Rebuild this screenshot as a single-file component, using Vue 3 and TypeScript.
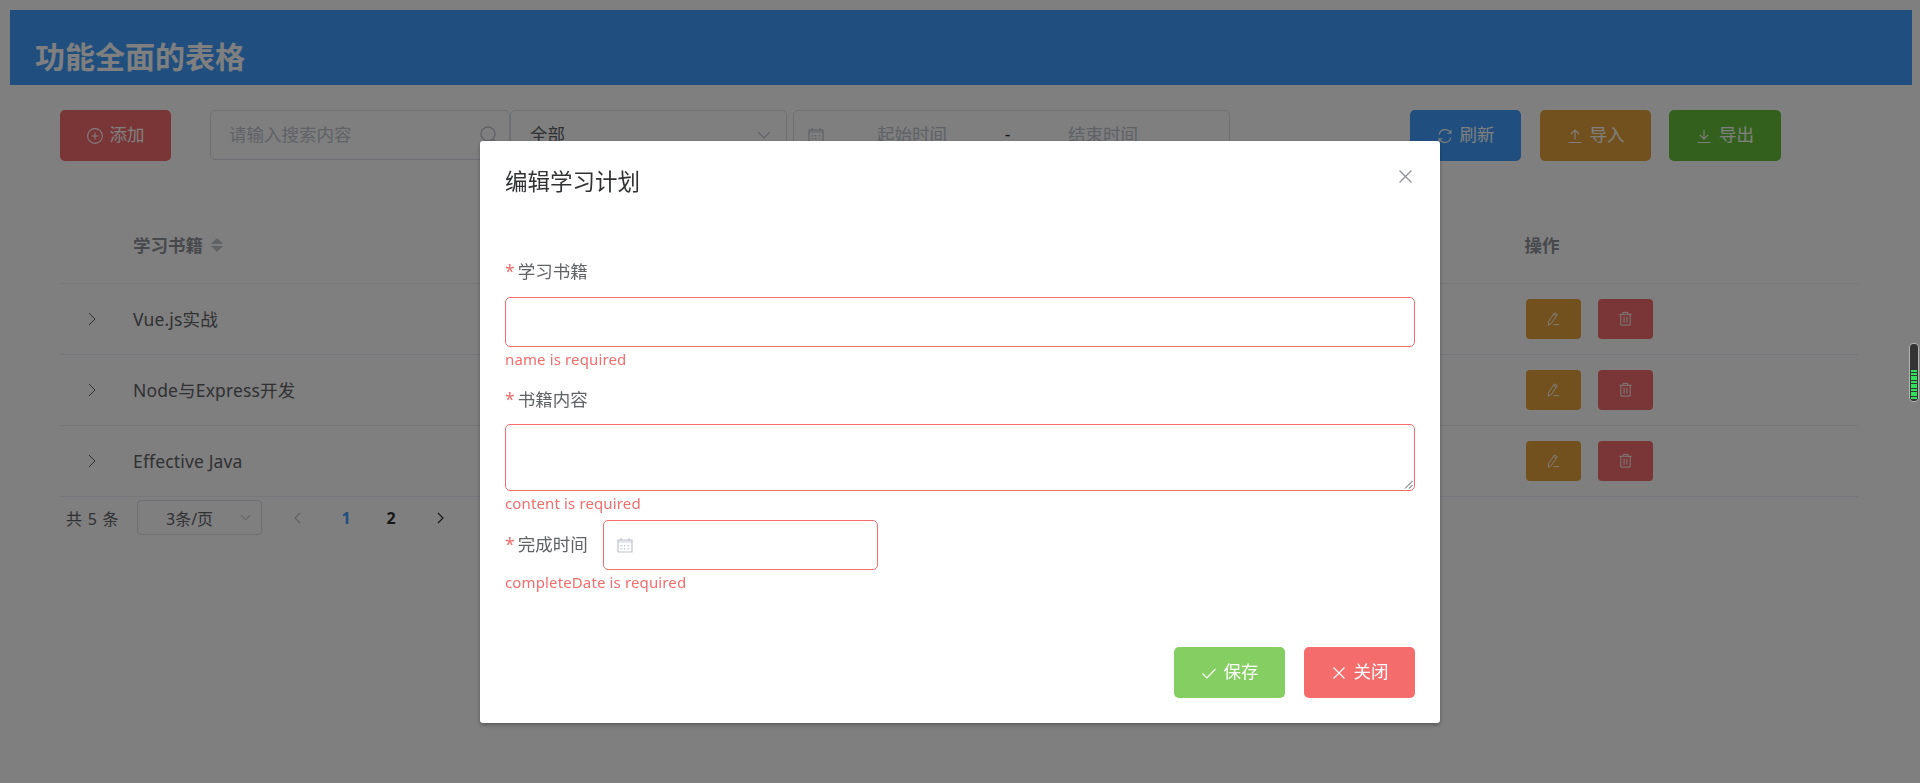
<script setup lang="ts">
interface Book { name: string }
const books: Book[] = [
  { name: 'Vue.js实战' },
  { name: 'Node与Express开发' },
  { name: 'Effective Java' },
]
const bars: number[] = Array.from({ length: 11 }, (_, i) => i)
</script>

<template>
  <div class="page">
    <header class="banner"><h2>功能全面的表格</h2></header>

    <div class="toolbar">
      <button class="btn danger add">
        <svg class="ico" viewBox="0 0 16 16"><circle cx="8" cy="8" r="7.400" /><path d="M8 4.600v6.800M4.600 8h6.800" /></svg>
        <span class="t">添加</span>
      </button>
      <div class="field search">
        <span class="placeholder">请输入搜索内容</span>
        <svg class="search-ico" viewBox="0 0 18 18"><circle cx="8" cy="8" r="7" /><path d="M13 13l4 4" /></svg>
      </div>
      <div class="field select">
        <span>全部</span>
        <svg class="chev" viewBox="0 0 14 8"><path d="M1 1l6 6 6-6" /></svg>
      </div>
      <div class="field range">
        <svg class="cal" viewBox="0 0 16 16"><path class="cal-band" d="M1 3h14v3H1z" /><path d="M1 3h14v12H1zM4 1v2M12 1v2" /><path class="cal-dots" d="M3.500 8.700h2M7 8.700h2M10.500 8.700h2M3.500 11.700h2M7 11.700h2M10.500 11.700h2" /></svg>
        <span class="range-text">起始时间</span>
        <span class="range-sep">-</span>
        <span class="range-text">结束时间</span>
      </div>
      <div class="tool-right">
        <button class="btn primary tool">
          <svg class="ico" viewBox="0 0 16 16"><path d="M2.200 6.500A6 6 0 0 1 13.500 5M13.800 9.500A6 6 0 0 1 2.500 11M14 1.800V5.300h-3.500M2 14.200v-3.500h3.500" /></svg>
          <span class="t">刷新</span>
        </button>
        <button class="btn warning tool">
          <svg class="ico" viewBox="0 0 16 16"><path d="M1.500 14.500h13M8 11.500V2M3.800 6.200L8 2l4.200 4.200" /></svg>
          <span class="t">导入</span>
        </button>
        <button class="btn success tool export">
          <svg class="ico" viewBox="0 0 16 16"><path d="M1.500 14.500h13M8 1.500V11M3.800 6.800L8 11l4.200-4.200" /></svg>
          <span class="t">导出</span>
        </button>
      </div>
    </div>

    <section class="table">
      <div class="row head">
        <div class="c-expand"></div>
        <div class="c-name">
          学习书籍
          <span class="carets"><i class="up"></i><i class="down"></i></span>
        </div>
        <div class="c-ops">操作</div>
      </div>
      <div v-for="b in books" :key="b.name" class="row">
        <div class="c-expand">
          <svg class="row-chev" viewBox="0 0 8 14"><path d="M1 1l6 6-6 6" /></svg>
        </div>
        <div class="c-name body-name">{{ b.name }}</div>
        <div class="c-ops ops">
          <button class="op warn">
            <svg viewBox="0 0 16 16"><path d="M2.500 11.500L9 2l3 2-6.500 9.500-3 1.500zM8 3.500l3 2M8 14.500h6" /></svg>
          </button>
          <button class="op del">
            <svg viewBox="0 0 16 16"><path d="M1.500 3.500h13M5.500 3.500V1.500h5v2M3 3.500V15h10V3.500M6.500 6v6.500M9.500 6v6.500" /></svg>
          </button>
        </div>
      </div>
    </section>

    <nav class="pager">
      <span class="total">共 5 条</span>
      <div class="size">
        <span>3条/页</span>
        <svg class="size-chev" viewBox="0 0 12 7"><path d="M1 1l5 5 5-5" /></svg>
      </div>
      <svg class="pg prev" viewBox="0 0 8 12"><path d="M7 1L2 6l5 5" /></svg>
      <span class="num active">1</span>
      <span class="num">2</span>
      <svg class="pg next" viewBox="0 0 8 12"><path d="M1 1l5 5-5 5" /></svg>
    </nav>

    <div class="overlay">
      <div class="dialog">
        <div class="dlg-head">
          <span class="dlg-title">编辑学习计划</span>
          <svg class="dlg-close" viewBox="0 0 12 12"><path d="M.500.500l11 11M11.500.500l-11 11" /></svg>
        </div>

        <form class="form">
          <div class="item first">
            <label class="label"><em>*</em>学习书籍</label>
            <div class="input bad"></div>
            <div class="err">name is required</div>
          </div>
          <div class="item">
            <label class="label"><em>*</em>书籍内容</label>
            <div class="input bad area">
              <svg class="grip" viewBox="0 0 9 9"><path d="M8.500 1L1 8.500M8.500 5L5 8.500" /></svg>
            </div>
            <div class="err">content is required</div>
          </div>
          <div class="item third">
            <div class="inline">
              <label class="label"><em>*</em>完成时间</label>
              <div class="input bad date">
                <svg class="cal light" viewBox="0 0 16 16"><path class="cal-band" d="M1 3h14v3H1z" /><path d="M1 3h14v12H1zM4 1v2M12 1v2" /><path class="cal-dots" d="M3.500 8.700h2M7 8.700h2M10.500 8.700h2M3.500 11.700h2M7 11.700h2M10.500 11.700h2" /></svg>
              </div>
            </div>
            <div class="err">completeDate is required</div>
          </div>
        </form>

        <div class="dlg-foot">
          <button class="btn save">
            <svg class="ico" viewBox="0 0 16 16"><path d="M1.500 8.500l4.500 4.500 8.500-9" /></svg>
            <span class="t">保存</span>
          </button>
          <button class="btn close">
            <svg class="ico" viewBox="0 0 16 16"><path d="M2.500 2.500l11 11M13.500 2.500l-11 11" /></svg>
            <span class="t">关闭</span>
          </button>
        </div>
      </div>
    </div>

    <div class="meter">
      <div class="meter-fill">
        <span v-for="n in bars" :key="n"></span>
      </div>
    </div>
  </div>
</template>

<style>
html, body { margin: 0; height: 100%; overflow: hidden; background: #fff; }
</style>

<style scoped>
* { box-sizing: border-box; }
.page {
  font-family: "Noto Sans", "Noto Sans CJK SC", sans-serif;
  padding: 10px 8px 0 10px;
  font-size: 17.500px;
  color: #606266;
}
.banner {
  height: 75px;
  background: #409eff;
  padding-left: 25px;
  display: flex;
  align-items: flex-end;
}
.banner h2 {
  margin: 0 0 6px;
  font-size: 30px;
  line-height: 44px;
  font-weight: 700;
  color: #fff;
}
.toolbar {
  display: flex;
  align-items: flex-start;
  margin: 25px 0 0 50px;
  height: 51px;
}
.btn {
  height: 51px;
  border: none;
  border-radius: 5px;
  font: inherit;
  color: #fff;
  display: inline-flex;
  align-items: center;
  justify-content: center;
  gap: 7px;
  padding: 0;
}
.t { margin-bottom: 4px; }
.ico { width: 16px; height: 16px; fill: none; stroke: currentColor; stroke-width: 1.100; }
.danger { background: #f56c6c; }
.primary { background: #409eff; }
.warning { background: #e6a23c; }
.success { background: #67c23a; }
.add { width: 111px; margin-right: 39px; }
.field {
  height: 50px;
  border: 1.250px solid #dcdfe6;
  border-radius: 5px;
  display: flex;
  align-items: center;
}
.field span { margin-bottom: 3px; }
.search { width: 300px; padding: 0 11px 0 18px; justify-content: space-between; }
.placeholder { color: #c0c4cc; }
.search-ico { width: 18px; height: 18px; fill: none; stroke: #c0c4cc; stroke-width: 1.300; }
.select { width: 277px; padding: 0 15px 0 19px; justify-content: space-between; color: #606266; }
.chev { width: 14px; height: 8px; fill: none; stroke: #c0c4cc; stroke-width: 1.200; }
.range { width: 437px; margin-left: 6px; padding-left: 14px; }
.cal { width: 16px; height: 16px; fill: none; stroke: #c0c4cc; stroke-width: 1.200; flex: none; }
.cal-band { fill: #e4e7ed; stroke: none; }
.cal-dots { stroke-width: 1.400; stroke-dasharray: 1.200 .6; }
.range-text { width: 70px; color: #c0c4cc; }
.range-text:first-of-type { margin-left: 53px; }
.range-sep { width: 121px; text-align: center; color: #303133; }
.tool-right { display: flex; margin-left: 180px; }
.tool { width: 111px; margin-right: 19px; }
.tool.export { margin-right: 0; margin-left: -1px; width: 112px; }

.table { margin: 60px 0 0 50px; width: 1798px; }
.row {
  display: flex;
  align-items: center;
  height: 71px;
  border-bottom: 1.250px solid #ebeef5;
}
.row.head { height: 62.700px; padding-bottom: 14px; font-weight: 700; color: #909399; }
.c-expand { width: 73px; padding-left: 28px; display: flex; align-items: center; }
.c-name { width: 1391.400px; display: flex; align-items: center; }
.body-name { letter-spacing: .15px; }
.c-ops { flex: 1; }
.ops { display: flex; gap: 17px; padding-left: 1.600px; }
.row-chev { width: 8px; height: 14px; fill: none; stroke: #606266; stroke-width: 1; }
.carets { display: inline-flex; flex-direction: column; gap: 2px; margin-left: 8px; }
.carets i { width: 0; height: 0; border-left: 6.500px solid transparent; border-right: 6.500px solid transparent; }
.carets .up { border-bottom: 6.500px solid #c0c4cc; }
.carets .down { border-top: 6.500px solid #c0c4cc; }
.op {
  width: 55px;
  height: 40px;
  border: none;
  border-radius: 4px;
  padding: 0;
  display: flex;
  align-items: center;
  justify-content: center;
}
.op svg { width: 15px; height: 15px; fill: none; stroke: #fff; stroke-width: 1; }
.warn { background: #e6a23c; }
.del { background: #f56c6c; }

.pager { display: flex; align-items: center; height: 34px; margin: 4px 0 0 56px; font-size: 16px; }
.total { width: 52px; white-space: nowrap; word-spacing: 1.500px; }
.size {
  width: 125px;
  height: 35px;
  margin-left: 19px;
  border: 1.250px solid #dcdfe6;
  border-radius: 4px;
  display: flex;
  align-items: center;
  justify-content: space-between;
  padding: 0 10px 0 28px;
}
.size-chev { width: 11px; height: 7px; fill: none; stroke: #c0c4cc; stroke-width: 1.100; }
.pg { width: 8px; height: 12px; fill: none; stroke-width: 1.200; }
.prev { stroke: #c0c4cc; margin-left: 31px; }
.next { stroke: #303133; margin-left: 41px; }
.num { font-weight: 700; color: #303133; width: 10px; text-align: center; margin-left: 35px; }
.prev + .num { margin-left: 40px; }
.num.active { color: #409eff; }

.overlay {
  position: fixed;
  inset: 0;
  background: rgba(0, 0, 0, 0.5);
}
.dialog {
  width: 960px;
  height: 581.500px;
  margin: 141px auto 0;
  background: #fff;
  border-radius: 3px;
  box-shadow: 0 2px 4px rgba(0, 0, 0, 0.3);
  display: flex;
  flex-direction: column;
  padding: 0 25px;
}
.dlg-head { display: flex; justify-content: space-between; align-items: center; height: 80px; padding-top: 3px; }
.dlg-title { font-size: 22.500px; color: #303133; line-height: 1; }
.dlg-close { width: 13px; height: 13px; fill: none; stroke: #909399; stroke-width: 1.200; margin: -12px 3px 0 0; }
.form { display: flex; flex-direction: column; }
.item { display: flex; flex-direction: column; }
.first { margin-top: 24px; }
.first .label { line-height: 52px; }
.third { margin-top: 4px; }
.label { display: block; line-height: 54px; height: 52px; color: #606266; white-space: nowrap; }
.label em { color: #f56c6c; font-style: normal; margin-right: 3px; }
.input { border: 1.250px solid #f56c6c; border-radius: 5px; background: #fff; height: 50px; position: relative; }
.area { height: 66.500px; }
.grip { position: absolute; right: 1px; bottom: 1px; width: 9px; height: 9px; fill: none; stroke: #555; stroke-width: 1; }
.inline { display: flex; align-items: center; height: 50px; }
.inline .label { width: 98px; height: 50px; line-height: 48px; }
.date { width: 274.500px; display: flex; align-items: center; padding-left: 13px; }
.err { color: #f56c6c; font-size: 15px; line-height: 25px; letter-spacing: .13px; }
.dlg-foot { margin-top: auto; margin-bottom: 24.500px; display: flex; justify-content: flex-end; gap: 19px; }
.save { width: 111px; background: #85ce61; }
.close { width: 111px; background: #f56c6c; }

.meter {
  position: fixed;
  left: 1909px;
  top: 343px;
  width: 10px;
  height: 59px;
  background: #333;
  border: 1px solid #b5b5b5;
  border-radius: 4px;
  display: flex;
  align-items: flex-end;
  padding: 0 1px 2px;
}
.meter-fill { width: 100%; display: flex; flex-direction: column; gap: .7px; }
.meter-fill span { display: block; height: 2px; background: #2ee05c; }
</style>
